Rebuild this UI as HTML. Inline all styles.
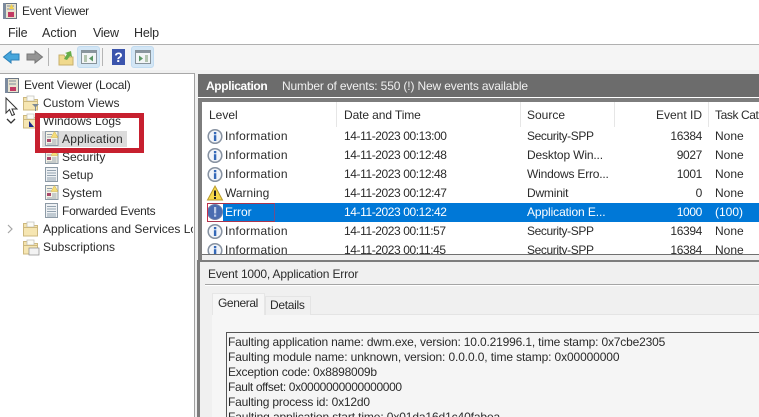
<!DOCTYPE html>
<html><head><meta charset="utf-8">
<style>
html,body{margin:0;padding:0;width:759px;height:417px;overflow:hidden;background:#f0f0f0}
body{position:relative;font-family:"Liberation Sans",sans-serif;font-size:12px;color:#2b2b2b}
.a{position:absolute}
.t{position:absolute;white-space:nowrap;line-height:16px;height:16px}
svg{position:absolute;overflow:visible}
.r{text-align:right}
.i{letter-spacing:.25px}
.d{letter-spacing:-.42px}
.n{letter-spacing:-.35px}
.s{letter-spacing:-.4px}
.m{letter-spacing:-.15px}
</style></head><body>
<svg width="0" height="0" style="position:absolute">
<defs>
<g id="info"><circle cx="8" cy="8.500" r="6.800" fill="#f1f4f9" stroke="#8792a1" stroke-width="1.500"/><rect x="6.900" y="4" width="2.400" height="2.300" fill="#3468b8"/><rect x="6.900" y="7.200" width="2.400" height="5.800" fill="#3468b8"/></g>
<g id="log"><rect x="1.500" y="1.500" width="12" height="14" fill="#eef1f4" stroke="#8d9aa6"/><path d="M3 4.500h9M3 7h9M3 9.500h9M3 12h9M3 14h9" stroke="#93a2af"/></g>
<g id="logw"><rect x="1.500" y="1.500" width="12.500" height="14" fill="#f5f3e6" stroke="#8d9aa6"/><path d="M3 4.500h5M3 7h5M8 10h4.500M8 12h4.500M3 14h9.500" stroke="#96a3af"/><path d="M10.500 1.500l3.500 6H7z" fill="#f5dd78" stroke="#cdb14c" stroke-width=".5"/><rect x="3" y="9" width="4" height="3" fill="#a9476a"/></g>
<g id="fold"><path d="M1.500 3.500h6l1 2h7v10.500h-14z" fill="#f4e3ac" stroke="#cdb87e"/><path d="M5 2h7v5H5z" fill="#fbfbf6" stroke="#c4c4bc" stroke-width=".8"/><path d="M1.500 7.500h14v8.500h-14z" fill="#f6e6b2" stroke="#cdb87e"/></g>
</defs></svg>

<!-- title bar -->
<div class="a" style="left:0;top:0;width:759px;height:44px;background:#fff"></div>
<svg style="left:2px;top:2px" width="17" height="18"><rect x="2.500" y="1.500" width="12" height="15" fill="#e7e2cf" stroke="#6b7684"/><rect x="1" y="1" width="3" height="16" fill="#7c8a9e"/><path d="M5 4h7M5 7h7" stroke="#7f8c99"/><path d="M9.500 2l2.500 5H7z" fill="#f3d24e"/><rect x="6" y="10" width="6" height="5" fill="#c23a63"/></svg>
<div class="t" style="left:22px;top:3px;letter-spacing:-.3px">Event Viewer</div>
<div class="t" style="left:8px;top:25px;font-size:12.5px;letter-spacing:-.2px">File</div>
<div class="t" style="left:42px;top:25px;font-size:12.5px">Action</div>
<div class="t" style="left:93px;top:25px;font-size:12.5px;letter-spacing:-.3px">View</div>
<div class="t" style="left:134px;top:25px;font-size:12.5px;letter-spacing:-.2px">Help</div>

<!-- toolbar -->
<div class="a" style="left:0;top:44px;width:759px;height:1px;background:#b0b0b0"></div>
<div class="a" style="left:0;top:45px;width:759px;height:25px;background:#f5f5f5"></div>
<svg style="left:3px;top:50px" width="17" height="14"><path d="M0.500 7L8 1v3h8v6H8v3z" fill="#46a6dc" stroke="#2a80b8"/></svg>
<svg style="left:26px;top:50px" width="17" height="14"><path d="M16.500 7L9 1v3H1v6h8v3z" fill="#949494" stroke="#777"/></svg>
<div class="a" style="left:48px;top:48px;width:1px;height:18px;background:#b5b5b5"></div>
<svg style="left:58px;top:50px" width="16" height="16"><path d="M1 5h5l1 2h8v8H1z" fill="#f0d98c" stroke="#c7b06c"/><path d="M6 9l3-5-2-1 6-2 1 6-2-1-3 4z" fill="#66ad48"/></svg>
<div class="a" style="left:77px;top:46px;width:23px;height:22px;background:#d3e6f5;border:1px solid #c2dcf1;border-radius:3px;box-sizing:border-box"></div>
<svg style="left:81px;top:50px" width="16" height="14"><rect x=".5" y=".5" width="15" height="13" fill="#f2f5f6" stroke="#87939b"/><rect x="1" y="1" width="14" height="2" fill="#8a969e"/><rect x="3" y="5" width="3" height="7" fill="#b3c5b0"/><path d="M12 5.500v6l-4-3z" fill="#5a9764"/></svg>
<div class="a" style="left:102px;top:48px;width:1px;height:18px;background:#b5b5b5"></div>
<div class="a" style="left:112px;top:49px;width:13px;height:16px;background:#3c55ad"></div>
<div class="t" style="left:112px;top:48px;width:13px;text-align:center;color:#fff;font-weight:bold;font-size:14px;line-height:18px">?</div>
<div class="a" style="left:131px;top:46px;width:23px;height:22px;background:#d3e6f5;border:1px solid #c2dcf1;border-radius:3px;box-sizing:border-box"></div>
<svg style="left:135px;top:50px" width="16" height="14"><rect x=".5" y=".5" width="15" height="13" fill="#f2f5f6" stroke="#87939b"/><rect x="1" y="1" width="14" height="2" fill="#8a969e"/><rect x="10" y="5" width="3" height="7" fill="#b3c5b0"/><path d="M4 5.500v6l4-3z" fill="#5a9764"/></svg>

<!-- left pane -->
<div class="a" style="left:0;top:73px;width:194px;height:344px;background:#fff;border-right:1px solid #a0a0a0;border-top:1px solid #a8a8a8"></div>
<svg style="left:4px;top:77px" width="17" height="17"><rect x="2.500" y="1.500" width="12" height="14" fill="#e7e2cf" stroke="#6b7684"/><rect x="1" y="1" width="3" height="15" fill="#7c8a9e"/><path d="M5 4h7M5 7h7" stroke="#7f8c99"/><rect x="6" y="10" width="6" height="4" fill="#c23a63"/></svg>
<div class="t" style="left:24px;top:77px;letter-spacing:-.2px">Event Viewer (Local)</div>
<svg style="left:22px;top:94px" width="17" height="17"><use href="#fold"/><path d="M10 10h7l-3 3v4h-1v-4z" fill="#7d8a94"/></svg>
<div class="t" style="left:43px;top:95px">Custom Views</div>
<svg style="left:5px;top:97px" width="14" height="21"><path d="M1 1v15l3.500-3.500 2.500 6 2.500-1-2.500-5.500h5z" fill="#fff" stroke="#333" stroke-width="1"/></svg>
<svg style="left:6px;top:118px" width="10" height="7"><path d="M1 1l4 4 4-4" fill="none" stroke="#333" stroke-width="1.300"/></svg>
<svg style="left:22px;top:112px" width="17" height="17"><use href="#fold"/><path d="M7 9l5 6H7z" fill="#1b2a8a"/></svg>
<div class="t" style="left:43px;top:113px">Windows Logs</div>
<div class="a" style="left:42px;top:131px;width:85px;height:16px;background:#dcdcdc"></div>
<svg style="left:44px;top:130px" width="15" height="17"><use href="#logw"/></svg>
<div class="t" style="left:62px;top:131px;letter-spacing:.2px">Application</div>
<svg style="left:44px;top:148px" width="15" height="17"><use href="#logw"/></svg>
<div class="t" style="left:62px;top:149px">Security</div>
<svg style="left:44px;top:166px" width="15" height="17"><use href="#log"/></svg>
<div class="t" style="left:62px;top:167px">Setup</div>
<svg style="left:44px;top:184px" width="15" height="17"><use href="#logw"/></svg>
<div class="t" style="left:62px;top:185px">System</div>
<svg style="left:44px;top:202px" width="15" height="17"><use href="#log"/></svg>
<div class="t" style="left:62px;top:203px;letter-spacing:-.25px">Forwarded Events</div>
<svg style="left:7px;top:224px" width="7" height="10"><path d="M1 1l4 4-4 4" fill="none" stroke="#a6a6a6" stroke-width="1.200"/></svg>
<svg style="left:22px;top:220px" width="17" height="17"><use href="#fold"/></svg>
<div class="t" style="left:43px;top:221px;width:150px;overflow:hidden">Applications and Services Logs</div>
<svg style="left:22px;top:238px" width="17" height="17"><use href="#fold"/><rect x="7" y="10" width="10" height="7" fill="#f3f3f3" stroke="#8a8a8a" stroke-width=".7"/></svg>
<div class="t" style="left:43px;top:239px">Subscriptions</div>

<!-- red box -->
<div class="a" style="left:35px;top:113px;width:109px;height:40px;box-sizing:border-box;border:5px solid #c7202f"></div>

<!-- right header -->
<div class="a" style="left:198px;top:74px;width:561px;height:23px;background:#6c6c6c"></div>
<div class="t" style="left:206px;top:78px;color:#fff;font-weight:bold;letter-spacing:-.36px">Application</div>
<div class="t m" style="left:282px;top:78px;color:#f0f0f0">Number of events: 550 (!) New events available</div>
<div class="a" style="left:198px;top:97px;width:561px;height:1px;background:#fff"></div>
<div class="a" style="left:198px;top:98px;width:4px;height:163px;background:#7d7d7d"></div>
<div class="a" style="left:197px;top:261px;width:3px;height:156px;background:#7d7d7d"></div>
<div class="a" style="left:198px;top:98px;width:561px;height:4px;background:#7d7d7d"></div>

<!-- list -->
<div class="a" style="left:202px;top:102px;width:557px;height:152px;background:#fff;overflow:hidden">
<div class="a" style="left:134px;top:0;width:1px;height:25px;background:#e6e6e6"></div>
<div class="a" style="left:318px;top:0;width:1px;height:25px;background:#e6e6e6"></div>
<div class="a" style="left:412px;top:0;width:1px;height:25px;background:#e6e6e6"></div>
<div class="a" style="left:506px;top:0;width:1px;height:25px;background:#e6e6e6"></div>
<div class="t" style="left:7px;top:5px">Level</div>
<div class="t" style="left:142px;top:5px;letter-spacing:-.1px">Date and Time</div>
<div class="t" style="left:325px;top:5px">Source</div>
<div class="t r" style="left:419px;top:5px;width:81px">Event ID</div>
<div class="t" style="left:513px;top:5px;letter-spacing:-.4px">Task Cat</div>

<svg style="left:5px;top:26px" width="16" height="16"><use href="#info"/></svg>
<div class="t i" style="left:23px;top:26px">Information</div><div class="t d" style="left:142px;top:26px">14-11-2023 00:13:00</div><div class="t s" style="left:325px;top:26px">Security-SPP</div><div class="t r n" style="left:419px;top:26px;width:81px">16384</div><div class="t" style="left:513px;top:26px">None</div>

<svg style="left:5px;top:45px" width="16" height="16"><use href="#info"/></svg>
<div class="t i" style="left:23px;top:45px">Information</div><div class="t d" style="left:142px;top:45px">14-11-2023 00:12:48</div><div class="t" style="left:325px;top:45px;letter-spacing:-.15px">Desktop Win...</div><div class="t r n" style="left:419px;top:45px;width:81px">9027</div><div class="t" style="left:513px;top:45px">None</div>

<svg style="left:5px;top:64px" width="16" height="16"><use href="#info"/></svg>
<div class="t i" style="left:23px;top:64px">Information</div><div class="t d" style="left:142px;top:64px">14-11-2023 00:12:48</div><div class="t" style="left:325px;top:64px;letter-spacing:-.2px">Windows Erro...</div><div class="t r n" style="left:419px;top:64px;width:81px">1001</div><div class="t" style="left:513px;top:64px">None</div>

<svg style="left:5px;top:83px" width="16" height="16"><path d="M8 1l7.500 14H.5z" fill="#f6d84a" stroke="#b79a2c"/><rect x="7" y="5.500" width="2" height="5.500" fill="#222"/><rect x="7" y="12" width="2" height="2" fill="#222"/></svg>
<div class="t" style="left:23px;top:83px">Warning</div><div class="t d" style="left:142px;top:83px">14-11-2023 00:12:47</div><div class="t" style="left:325px;top:83px;letter-spacing:-.2px">Dwminit</div><div class="t r n" style="left:419px;top:83px;width:81px">0</div><div class="t" style="left:513px;top:83px">None</div>

<div class="a" style="left:21px;top:101px;width:536px;height:19px;background:#0078d7"></div>
<svg style="left:5px;top:102px" width="16" height="16"><circle cx="8" cy="8" r="7.500" fill="#4a6cb0" stroke="#6d7fa8"/><rect x="7" y="3" width="2.200" height="6.500" fill="#b9c8e6"/><rect x="7" y="10.500" width="2.200" height="2.200" fill="#b9c8e6"/></svg>
<div class="a" style="left:5px;top:101px;width:68px;height:19px;box-sizing:border-box;border:1px solid #70508a;border-left-color:#c8304a;border-top-color:#a8344c;border-bottom-color:#a8344c"></div>
<div class="t" style="left:23px;top:102px;color:#fff">Error</div><div class="t d" style="left:142px;top:102px;color:#fff">14-11-2023 00:12:42</div><div class="t" style="left:325px;top:102px;color:#fff;letter-spacing:-.1px">Application E...</div><div class="t r n" style="left:419px;top:102px;width:81px;color:#fff">1000</div><div class="t" style="left:513px;top:102px;color:#fff">(100)</div>

<svg style="left:5px;top:121px" width="16" height="16"><use href="#info"/></svg>
<div class="t i" style="left:23px;top:121px">Information</div><div class="t d" style="left:142px;top:121px">14-11-2023 00:11:57</div><div class="t s" style="left:325px;top:121px">Security-SPP</div><div class="t r n" style="left:419px;top:121px;width:81px">16394</div><div class="t" style="left:513px;top:121px">None</div>

<svg style="left:5px;top:140px" width="16" height="16"><use href="#info"/></svg>
<div class="t i" style="left:23px;top:140px">Information</div><div class="t d" style="left:142px;top:140px">14-11-2023 00:11:45</div><div class="t s" style="left:325px;top:140px">Security-SPP</div><div class="t r n" style="left:419px;top:140px;width:81px">16384</div><div class="t" style="left:513px;top:140px">None</div>
</div>
<div class="a" style="left:202px;top:254px;width:557px;height:1px;background:#707070"></div>
<div class="a" style="left:202px;top:255px;width:557px;height:5px;background:#efefef"></div>
<div class="a" style="left:197px;top:260px;width:562px;height:2px;background:#7d7d7d"></div>

<!-- detail -->
<div class="t" style="left:208px;top:266px;letter-spacing:-.18px">Event 1000, Application Error</div>
<div class="a" style="left:205px;top:284px;width:554px;height:1px;background:#a5a5a5"></div>
<div class="a" style="left:205px;top:285px;width:554px;height:1px;background:#fff"></div>
<div class="a" style="left:212px;top:314px;width:547px;height:103px;background:#f6f6f6;border-top:1px solid #e4e4e4"></div>
<div class="a" style="left:265px;top:296px;width:44px;height:18px;background:#f0f0f0;border:1px solid #e4e4e4;border-bottom:0"></div>
<div class="a" style="left:212px;top:293px;width:53px;height:22px;background:#f6f6f6;border:1px solid #e6e6e6;border-bottom:0;box-sizing:border-box"></div>
<div class="t" style="left:218px;top:295px;letter-spacing:-.4px">General</div>
<div class="t" style="left:270px;top:297px;letter-spacing:-.3px">Details</div>
<div class="a" style="left:226px;top:332px;width:533px;height:85px;background:#f5f5f5;border-left:1px solid #555;border-top:1px solid #555;box-sizing:border-box"></div>
<div class="t" style="left:228px;top:334px;letter-spacing:-.17px">Faulting application name: dwm.exe, version: 10.0.21996.1, time stamp: 0x7cbe2305</div>
<div class="t" style="left:228px;top:349px;letter-spacing:-.125px">Faulting module name: unknown, version: 0.0.0.0, time stamp: 0x00000000</div>
<div class="t" style="left:228px;top:364px;letter-spacing:-.23px">Exception code: 0x8898009b</div>
<div class="t" style="left:228px;top:379px;letter-spacing:-.36px">Fault offset: 0x0000000000000000</div>
<div class="t" style="left:228px;top:394px;letter-spacing:-.18px">Faulting process id: 0x12d0</div>
<div class="t" style="left:228px;top:409px;letter-spacing:-.12px">Faulting application start time: 0x01da16d1c40fabea</div>
</body></html>
